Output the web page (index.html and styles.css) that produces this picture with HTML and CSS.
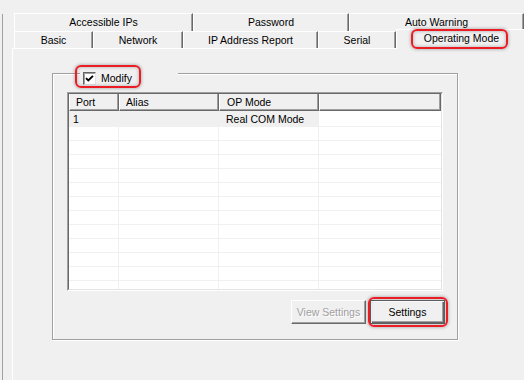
FILE: index.html
```html
<!DOCTYPE html>
<html>
<head>
<meta charset="utf-8">
<title>Operating Mode</title>
<link rel="stylesheet" href="styles.css">
</head>
<body>
<div class="window">
  <div class="frame-line"></div>
  <div class="tabctl">
    <div class="tabrow back">
      <div class="tab t-access">Accessible IPs</div>
      <div class="tab t-pass">Password</div>
      <div class="tab t-warn">Auto Warning</div>
    </div>
    <div class="tabrow front">
      <div class="tab t-basic">Basic</div>
      <div class="tab t-net">Network</div>
      <div class="tab t-ip">IP Address Report</div>
      <div class="tab t-serial">Serial</div>
      <div class="tab t-op selected">Operating Mode<span class="hl hl-tab"></span></div>
    </div>
    <div class="panel">
      <div class="group">
        <div class="legend">
          <span class="cb"><svg width="9" height="9" viewBox="0 0 9 9"><polyline points="1,4.2 3.3,6.5 8,1.8" fill="none" stroke="#000" stroke-width="1.9"/></svg></span>
          <span>Modify</span>
        </div>
        <span class="hl hl-legend"></span>
        <div class="list">
          <div class="list-inner">
            <div class="lv-head">
              <div class="hc c1">Port</div>
              <div class="hc c2">Alias</div>
              <div class="hc c3">OP Mode</div>
              <div class="hc c4"></div>
            </div>
            <div class="lv-row first">
              <div class="cell c1 sel">1</div>
              <div class="cell c2 sel"></div>
              <div class="cell c3 sel">Real COM Mode</div>
              <div class="cell c4"></div>
            </div>
            <div class="lv-row"><div class="cell c1"></div><div class="cell c2"></div><div class="cell c3"></div><div class="cell c4"></div></div>
            <div class="lv-row"><div class="cell c1"></div><div class="cell c2"></div><div class="cell c3"></div><div class="cell c4"></div></div>
            <div class="lv-row"><div class="cell c1"></div><div class="cell c2"></div><div class="cell c3"></div><div class="cell c4"></div></div>
            <div class="lv-row"><div class="cell c1"></div><div class="cell c2"></div><div class="cell c3"></div><div class="cell c4"></div></div>
            <div class="lv-row"><div class="cell c1"></div><div class="cell c2"></div><div class="cell c3"></div><div class="cell c4"></div></div>
            <div class="lv-row"><div class="cell c1"></div><div class="cell c2"></div><div class="cell c3"></div><div class="cell c4"></div></div>
            <div class="lv-row"><div class="cell c1"></div><div class="cell c2"></div><div class="cell c3"></div><div class="cell c4"></div></div>
            <div class="lv-row"><div class="cell c1"></div><div class="cell c2"></div><div class="cell c3"></div><div class="cell c4"></div></div>
            <div class="lv-row"><div class="cell c1"></div><div class="cell c2"></div><div class="cell c3"></div><div class="cell c4"></div></div>
            <div class="lv-row"><div class="cell c1"></div><div class="cell c2"></div><div class="cell c3"></div><div class="cell c4"></div></div>
            <div class="lv-row"><div class="cell c1"></div><div class="cell c2"></div><div class="cell c3"></div><div class="cell c4"></div></div>
            <div class="lv-row"><div class="cell c1"></div><div class="cell c2"></div><div class="cell c3"></div><div class="cell c4"></div></div>
          </div>
        </div>
        <div class="actions">
          <div class="btn disabled">View Settings</div>
          <div class="btn default">Settings<span class="hl hl-btn"></span></div>
        </div>
      </div>
    </div>
  </div>
</div>
</body>
</html>
```
FILE: styles.css
```css
body {
  margin: 0;
  background: #f0f0f0;
  font-family: "Liberation Sans", Arial, sans-serif;
  font-size: 10.5px;
  color: #000;
}

.window {
  display: flex;
  height: 380px;
  overflow: hidden;
}

.frame-line {
  flex: none;
  width: 1px;
  margin: 14px 0 0 2px;
  background: #a0a0a0;
}

.tabctl {
  flex: 1;
  min-width: 0;
  display: flex;
  flex-direction: column;
  padding-top: 13px;
  margin-left: 9px;
}

.tabrow {
  display: flex;
  flex: none;
  padding-left: 2px;
}

.tabrow.back {
  height: 18px;
}

.tabrow.front {
  height: 17px;
  align-items: flex-end;
  position: relative;
  z-index: 1;
}

.tab {
  flex: none;
  box-sizing: border-box;
  height: 100%;
  background: #f0f0f0;
  border-top: 1px solid #fff;
  border-left: 1px solid #fff;
  border-right: 1px solid #696969;
  box-shadow: inset -1px 0 #a0a0a0;
  text-align: center;
  white-space: nowrap;
}

.back .tab { line-height: 16px; }
.front .tab { line-height: 17px; }

.t-access { width: 179px; }
.t-pass { width: 156px; }
.t-warn { width: 175px; }
.t-basic { width: 79px; }
.t-net { width: 90px; }
.t-ip { width: 135px; }
.t-serial { width: 78px; }
.t-op { width: 130px; }

.tab.selected {
  position: relative;
  height: 20px;
  margin-bottom: -1px;
  border-right: none;
  box-shadow: none;
}

.panel {
  flex: 1;
  border-top: 1px solid #fff;
  border-left: 1px solid #fff;
  padding: 24px 0 0 39px;
}

.group {
  position: relative;
  box-sizing: border-box;
  width: 406px;
  height: 267px;
  border: 1px solid #a0a0a0;
  box-shadow: inset 1px 1px #fff, 1px 1px #fff;
  padding: 18px 13px 0 14px;
}

.legend {
  position: absolute;
  left: 27px;
  top: -3px;
  width: 98px;
  height: 14px;
  box-sizing: border-box;
  padding-left: 3px;
  display: flex;
  align-items: center;
  gap: 5px;
  background: #f0f0f0;
}

.cb {
  box-sizing: border-box;
  width: 13px;
  height: 13px;
  flex: none;
  display: flex;
  align-items: center;
  justify-content: center;
  background: #fff;
  border: 1px solid;
  border-color: #646464 #e3e3e3 #e3e3e3 #646464;
  box-shadow: inset 1px 1px #a0a0a0;
}

.list {
  box-sizing: border-box;
  width: 376px;
  height: 199px;
  border-top: 1px solid #a0a0a0;
  border-left: 1px solid #a0a0a0;
  border-right: 1px solid #fff;
  border-bottom: 1px solid #fff;
}

.list-inner {
  box-sizing: border-box;
  height: 100%;
  overflow: hidden;
  background: #fff;
  border-top: 1px solid #696969;
  border-left: 1px solid #696969;
  border-right: 1px solid #e3e3e3;
  border-bottom: 1px solid #e3e3e3;
}

.lv-head {
  display: flex;
  height: 17px;
}

.hc {
  box-sizing: border-box;
  height: 100%;
  background: #f0f0f0;
  border-left: 1px solid #fff;
  border-right: 1px solid #696969;
  border-bottom: 1px solid #696969;
  box-shadow: inset -1px -1px #a0a0a0;
  padding-left: 6px;
  line-height: 16px;
  white-space: nowrap;
}

.c1 { width: 50px; flex: none; }
.c2 { width: 100px; flex: none; }
.c3 { width: 100px; flex: none; }
.c4 { flex: 1; }

.hc.c3 { padding-left: 7px; }

.lv-row {
  display: flex;
  height: 14px;
}

.lv-row.first {
  height: 16px;
}

.cell {
  box-sizing: border-box;
  height: 100%;
  border-right: 1px solid #f0f0f0;
  border-bottom: 1px solid #f0f0f0;
  padding-left: 6px;
  line-height: 14px;
  white-space: nowrap;
}

.cell.c1 { padding-left: 4px; }
.cell.c3 { padding-left: 7px; }
.cell.c4 { border-right: none; }

.first .cell { line-height: 17px; }

.cell.sel {
  background: #f0f0f0;
}

.actions {
  display: flex;
  justify-content: flex-end;
  gap: 4px;
  margin-top: 9px;
  margin-right: -1px;
}

.btn {
  position: relative;
  box-sizing: border-box;
  width: 75px;
  height: 24px;
  background: #f0f0f0;
  border-top: 1px solid #fff;
  border-left: 1px solid #fff;
  border-right: 1px solid #696969;
  border-bottom: 1px solid #696969;
  box-shadow: inset -1px -1px #a0a0a0;
  text-align: center;
  line-height: 22px;
  white-space: nowrap;
}

.btn.disabled {
  color: #a0a0a0;
  text-shadow: 1px 1px #fff;
}

.btn.default {
  border: 1px solid #646464;
  box-shadow: inset 1px 1px #fff, inset -1px -1px #696969, inset -2px -2px #a0a0a0;
}

.hl {
  position: absolute;
  box-sizing: border-box;
  border: 2px solid #ec1c24;
  border-radius: 6px;
  box-shadow: 0 0 3px 1px rgba(0, 0, 0, 0.22), inset 0 0 3px 1px rgba(0, 0, 0, 0.18);
  pointer-events: none;
}

.hl-tab {
  left: 14px;
  top: -1px;
  width: 97px;
  height: 20px;
}

.hl-legend {
  left: 22px;
  top: -9px;
  width: 66px;
  height: 23px;
}

.hl-btn {
  left: -3px;
  top: -4px;
  width: 80px;
  height: 30px;
}
```
